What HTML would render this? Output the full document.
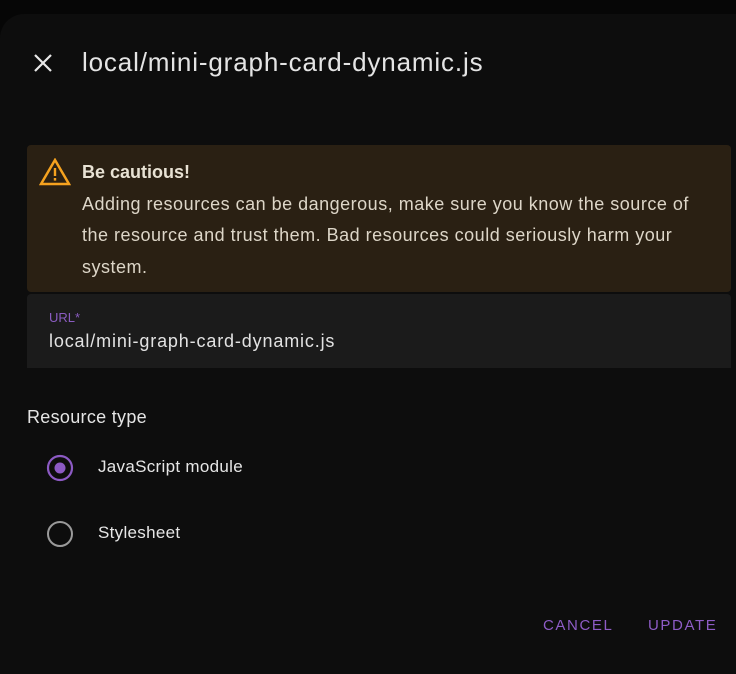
<!DOCTYPE html>
<html><head><style>
*{margin:0;padding:0;box-sizing:border-box}
body{width:736px;height:649px;background:#060606;font-family:"Liberation Sans",sans-serif;overflow:hidden;position:relative}
.dlg{position:absolute;left:0;top:14px;width:760px;height:660px;background:#0d0d0d;border-radius:24px 0 0 0}
.abs{position:absolute;white-space:nowrap}
.title{left:82px;top:47px;font-size:26px;color:#e4e4e4;letter-spacing:0.85px}
.alert{left:27px;top:145px;width:704px;height:147px;background:#2a2013;border-radius:4px}
.at{left:82px;top:157px;font-size:18px;color:#ddd6c8;line-height:31.5px;width:620px;white-space:normal;letter-spacing:0.5px}
.url{left:27px;top:294px;width:704px;height:74px;background:#1b1b1b;border-radius:4px 4px 0 0}
.lbl{left:49px;top:310px;font-size:13px;color:#8a5cc0}
.val{left:49px;top:331px;font-size:18px;color:#e2e2e2;letter-spacing:0.85px}
.rt{left:27px;top:407px;font-size:18px;color:#e4e4e4;letter-spacing:0.3px}
.opt{font-size:17px;color:#e6e6e6;letter-spacing:0.3px}
.btn{font-size:15px;color:#8e5cc6;letter-spacing:1.6px;top:617px}
</style></head><body>
<div class="dlg"></div>
<svg class="abs" style="left:33px;top:53px" width="20" height="20" viewBox="0 0 20 20"><path d="M2 2L18 18M18 2L2 18" stroke="#e8e8e8" stroke-width="2.2"/></svg>
<div class="abs title">local/mini-graph-card-dynamic.js</div>
<div class="abs alert"></div>
<svg class="abs" style="left:39px;top:158px" width="32" height="28" viewBox="0 0 32 28"><path d="M16 2L30 26H2Z" fill="none" stroke="#f5a21f" stroke-width="2.5" stroke-linejoin="miter"/><rect x="14.8" y="10" width="2.4" height="8" fill="#f5a21f"/><rect x="14.8" y="20" width="2.4" height="2.6" fill="#f5a21f"/></svg>
<div class="abs at"><b style="color:#e8e2d4;letter-spacing:0">Be cautious!</b><br>Adding resources can be dangerous, make sure you know the source of the resource and trust them. Bad resources could seriously harm your system.</div>
<div class="abs url"></div>
<div class="abs lbl">URL*</div>
<div class="abs val">local/mini-graph-card-dynamic.js</div>
<div class="abs rt">Resource type</div>
<svg class="abs" style="left:46px;top:454px" width="28" height="28" viewBox="0 0 28 28"><circle cx="14" cy="14" r="12" fill="none" stroke="#8c5ac4" stroke-width="2.2"/><circle cx="14" cy="14" r="5.5" fill="#8c5ac4"/></svg>
<div class="abs opt" style="left:98px;top:457px">JavaScript module</div>
<svg class="abs" style="left:46px;top:520px" width="28" height="28" viewBox="0 0 28 28"><circle cx="14" cy="14" r="12" fill="none" stroke="#9a9a9a" stroke-width="2"/></svg>
<div class="abs opt" style="left:98px;top:523px">Stylesheet</div>
<div class="abs btn" style="left:543px">CANCEL</div>
<div class="abs btn" style="left:648px">UPDATE</div>
</body></html>
